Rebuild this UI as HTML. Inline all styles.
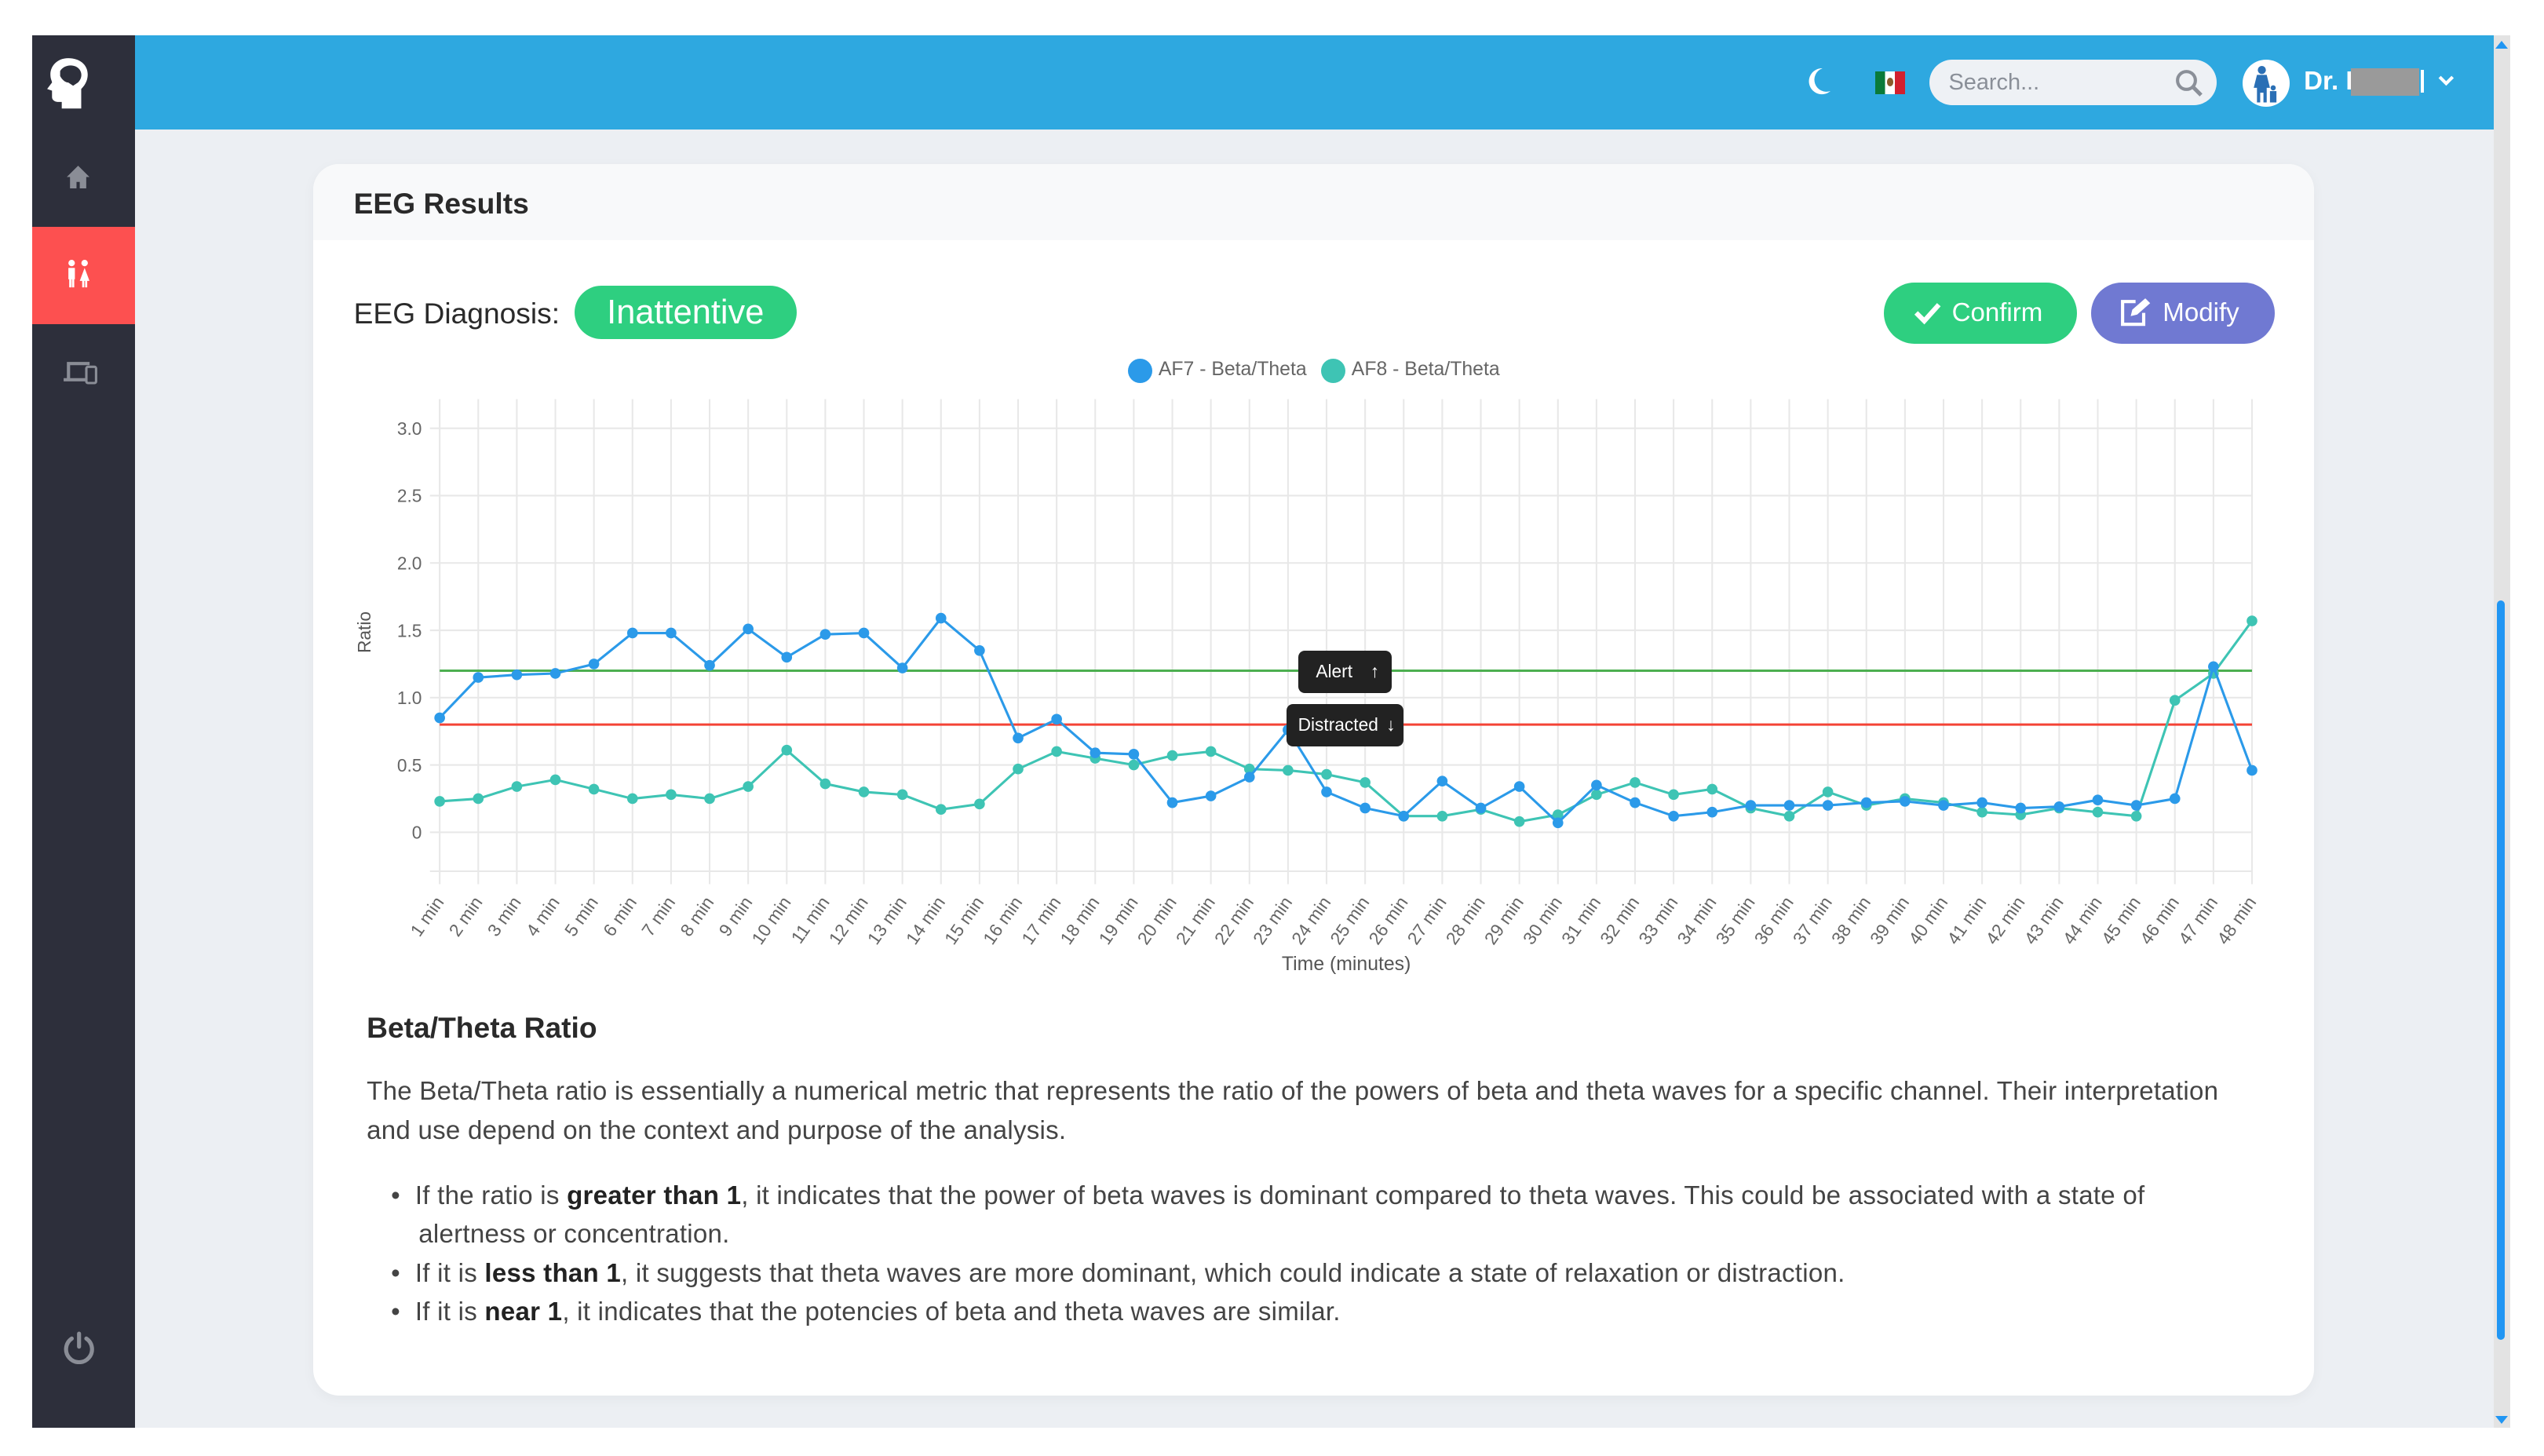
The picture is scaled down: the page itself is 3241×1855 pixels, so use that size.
<!DOCTYPE html>
<html><head><meta charset="utf-8">
<style>
*{box-sizing:border-box;margin:0;padding:0}
html,body{width:3241px;height:1855px;overflow:hidden;background:#fff}
#w{position:relative;width:1568px;height:898px;zoom:2.067;font-family:"Liberation Sans",sans-serif;color:#222}
.a{position:absolute}
.nw{white-space:nowrap}
</style></head><body><div id="w">
<div class="a" style="left:20px;top:22px;width:63px;height:858px;background:#2d2f3b"></div>
<svg class="a" style="left:28px;top:34px" width="28" height="34" viewBox="0 0 28 34"><path d="M14 2C7 2 3 7 3 12c0 3 1 4 1 5l-3 4 3 1v4c0 2 2 3 4 3h2v4h12V21c3-3 4-6 4-9 0-6-5-10-12-10z" fill="#fff"/><path d="M9 10c2-4 9-5 12-1 2 3 1 6-1 8l-3 2-3-2c-2 0-4-2-5-4z" fill="#2d2f3b"/></svg>
<svg class="a" style="left:40px;top:101px" width="16" height="16" viewBox="0 0 16 16"><path d="M8 1L1 8h2v7h4v-4h2v4h4V8h2z" fill="#8a8d96"/></svg>
<div class="a" style="left:20px;top:140px;width:63px;height:60px;background:#fd5050"></div>
<svg class="a" style="left:40px;top:160px" width="16" height="18" viewBox="0 0 16 18"><circle cx="4" cy="2" r="2" fill="#fff"/><circle cx="12" cy="2" r="2" fill="#fff"/><rect x="2" y="5" width="4" height="7" fill="#fff"/><rect x="2.5" y="11" width="1.4" height="6" fill="#fff"/><rect x="4.2" y="11" width="1.4" height="6" fill="#fff"/><path d="M12 5l-3 8h6z" fill="#fff"/><rect x="10.5" y="12" width="1.3" height="5" fill="#fff"/><rect x="12.3" y="12" width="1.3" height="5" fill="#fff"/></svg>
<svg class="a" style="left:38px;top:221px" width="22" height="16" viewBox="0 0 22 16"><path d="M3 2h14v2H5v8h10v2H1v-2h2z" fill="#8a8d96"/><rect x="15" y="5" width="6" height="10" rx="1" fill="none" stroke="#8a8d96" stroke-width="1.5"/></svg>
<svg class="a" style="left:38px;top:820px" width="21" height="21" viewBox="0 0 21 21"><path d="M6 5a8 8 0 1 0 9 0" fill="none" stroke="#8a8d96" stroke-width="2.5" stroke-linecap="round"/><path d="M10.5 2v8" stroke="#8a8d96" stroke-width="2.5" stroke-linecap="round"/></svg>
<div class="a" style="left:83px;top:80px;width:1454px;height:800px;background:#eceff3"></div>
<div class="a" style="left:1537px;top:22px;width:10px;height:858px;background:#e3e3e3"></div>
<div class="a" style="left:1539px;top:370px;width:5px;height:456px;background:#2196f3;border-radius:3px"></div>
<div class="a" style="left:1538px;top:25px;width:0;height:0;border-left:4px solid transparent;border-right:4px solid transparent;border-bottom:5px solid #2196f3"></div>
<div class="a" style="left:1538px;top:873px;width:0;height:0;border-left:4px solid transparent;border-right:4px solid transparent;border-top:5px solid #2196f3"></div>
<div class="a" style="left:83px;top:22px;width:1454px;height:58px;background:#2ea8e0"></div>
<svg class="a" style="left:1113px;top:41px" width="16" height="18" viewBox="0 0 16 18"><path d="M10 1a8 8 0 1 0 5 14A7 7 0 0 1 10 1z" fill="#fff"/></svg>
<div class="a" style="left:1156px;top:44px;width:18px;height:14px;background:linear-gradient(90deg,#0a7a3a 0 6px,#fff 6px 12px,#d2202f 12px)"></div>
<div class="a" style="left:1163px;top:48px;width:4px;height:5px;background:#8a5a2a;border-radius:50%"></div>
<div class="a" style="left:1189px;top:37px;width:177px;height:28px;background:#eef1f5;border-radius:14px"></div>
<div class="a nw" style="left:1201px;top:43px;font-size:14px;color:#8a8f98">Search...</div>
<svg class="a" style="left:1340px;top:42px" width="18" height="18" viewBox="0 0 18 18"><circle cx="7.5" cy="7.5" r="5.5" fill="none" stroke="#8a8f98" stroke-width="2"/><path d="M11.5 11.5l5 5" stroke="#8a8f98" stroke-width="2.4"/></svg>
<div class="a" style="left:1382px;top:37px;width:29px;height:29px;background:#fff;border-radius:50%"></div>
<svg class="a" style="left:1386px;top:40px" width="20" height="24" viewBox="0 0 20 24"><circle cx="8" cy="3" r="2.5" fill="#2a6fb5"/><path d="M5 6h6l2 8h-2v9H9v-6H7v6H5v-9H3z" fill="#2a6fb5"/><circle cx="15" cy="14" r="1.6" fill="#2a6fb5"/><path d="M13 16h4v7h-4z" fill="#2a6fb5"/></svg>
<div class="a nw" style="left:1420px;top:41px;font-size:16px;font-weight:bold;color:#fff">Dr. I</div>
<div class="a" style="left:1449px;top:42px;width:42px;height:17px;background:#9a9a9a"></div>
<div class="a" style="left:1492px;top:43px;width:2px;height:14px;background:#fff"></div>
<svg class="a" style="left:1502px;top:46px" width="11" height="8" viewBox="0 0 11 8"><path d="M1.5 1.5l4 4 4-4" fill="none" stroke="#fff" stroke-width="2"/></svg>
<div class="a" style="left:193px;top:101px;width:1233px;height:759px;background:#fff;border-radius:16px;box-shadow:0 2px 8px rgba(0,0,0,.04);overflow:hidden">
 <div style="height:47px;background:#f8f9fa"></div>
</div>
<div class="a nw" style="left:218px;top:115px;font-size:18px;font-weight:bold;color:#2a2a2a">EEG Results</div>
<div class="a nw" style="left:218px;top:183px;font-size:18px;color:#2a2a2a">EEG Diagnosis:</div>
<div class="a nw" style="left:354px;top:176px;width:137px;height:33px;border-radius:17px;background:#2ecf80;color:#fff;font-size:21px;text-align:center;line-height:33px">Inattentive</div>
<div class="a nw" style="left:1161px;top:174px;width:119px;height:38px;border-radius:19px;background:#2ecf80;color:#fff;font-size:16px;line-height:38px;padding-left:42px">Confirm</div>
<svg class="a" style="left:1179px;top:185px" width="18" height="16" viewBox="0 0 18 16"><path d="M2 8l5 5L16 3" fill="none" stroke="#fff" stroke-width="3"/></svg>
<div class="a nw" style="left:1289px;top:174px;width:113px;height:38px;border-radius:19px;background:#7079d2;color:#fff;font-size:16px;line-height:38px;padding-left:44px">Modify</div>
<svg class="a" style="left:1306px;top:183px" width="20" height="19" viewBox="0 0 20 19"><path d="M10 3H2v14h13v-7" fill="none" stroke="#fff" stroke-width="2"/><path d="M7 12l1-4 8-7 3 3-8 7z" fill="#fff"/></svg>
<div class="a" style="left:695px;top:221px;width:15px;height:15px;border-radius:50%;background:#2b9ae9"></div>
<div class="a nw" style="left:714px;top:221px;font-size:12px;color:#666">AF7 - Beta/Theta</div>
<div class="a" style="left:814px;top:221px;width:15px;height:15px;border-radius:50%;background:#3ec4b4"></div>
<div class="a nw" style="left:833px;top:221px;font-size:12px;color:#666">AF8 - Beta/Theta</div>
<svg id="ch" class="a" style="left:0;top:0" width="1560" height="620"></svg>
<div class="a nw" style="left:800px;top:401px;width:58px;height:26px;background:#222;border-radius:4px;color:#fff;font-size:11px;line-height:26px;padding-left:11px">Alert <span style="margin-left:8px">↑</span></div>
<div class="a nw" style="left:793px;top:434px;width:72px;height:26px;background:#222;border-radius:4px;color:#fff;font-size:11px;line-height:26px;padding-left:7px">Distracted <span style="margin-left:2px">↓</span></div>
<div class="a nw" style="left:790px;top:588px;font-size:12px;color:#555">Time (minutes)</div>
<div class="a nw" style="left:212px;top:383px;font-size:11px;color:#555;transform:rotate(-90deg);transform-origin:center">Ratio</div>
<div class="a nw" style="left:226px;top:623px;font-size:18px;font-weight:bold;color:#2a2a2a">Beta/Theta Ratio</div>
<div class="a nw" style="left:226px;top:661px;font-size:16px;line-height:24px;color:#444;letter-spacing:0.12px">The Beta/Theta ratio is essentially a numerical metric that represents the ratio of the powers of beta and theta waves for a specific channel. Their interpretation<br>and use depend on the context and purpose of the analysis.</div>
<div class="a nw" style="left:241px;top:725px;font-size:16px;line-height:24px;color:#444;letter-spacing:0.12px">
<div>•&nbsp; If the ratio is <b style="color:#222">greater than 1</b>, it indicates that the power of beta waves is dominant compared to theta waves. This could be associated with a state of</div>
<div style="padding-left:17px">alertness or concentration.</div>
<div>•&nbsp; If it is <b style="color:#222">less than 1</b>, it suggests that theta waves are more dominant, which could indicate a state of relaxation or distraction.</div>
<div>•&nbsp; If it is <b style="color:#222">near 1</b>, it indicates that the potencies of beta and theta waves are similar.</div>
</div>
</div>
<script>
var a=[0.85,1.15,1.17,1.18,1.25,1.48,1.48,1.24,1.51,1.3,1.47,1.48,1.22,1.59,1.35,0.7,0.84,0.59,0.58,0.22,0.27,0.41,0.76,0.3,0.18,0.12,0.38,0.18,0.34,0.07,0.35,0.22,0.12,0.15,0.2,0.2,0.2,0.22,0.23,0.2,0.22,0.18,0.19,0.24,0.2,0.25,1.23,0.46];
var b=[0.23,0.25,0.34,0.39,0.32,0.25,0.28,0.25,0.34,0.61,0.36,0.3,0.28,0.17,0.21,0.47,0.6,0.55,0.5,0.57,0.6,0.47,0.46,0.43,0.37,0.12,0.12,0.17,0.08,0.13,0.28,0.37,0.28,0.32,0.18,0.12,0.3,0.2,0.25,0.22,0.15,0.13,0.18,0.15,0.12,0.98,1.18,1.57];
var x0=271,dx=(1388-271)/47,Y=function(v){return 513-v*83};
var s='';
for(var i=0;i<48;i++){var x=x0+i*dx;s+='<line x1="'+x+'" y1="246" x2="'+x+'" y2="545" stroke="#e8e8e8"/>';
s+='<text transform="translate('+(x+3)+',556) rotate(-55)" text-anchor="end" font-size="11" fill="#666" font-family="Liberation Sans">'+(i+1)+' min</text>';}
for(var k=0;k<=6;k++){var y=Y(k*0.5);s+='<line x1="265" y1="'+y+'" x2="1388" y2="'+y+'" stroke="#e8e8e8"/>';
s+='<text x="260" y="'+(y+4)+'" text-anchor="end" font-size="11" fill="#666" font-family="Liberation Sans">'+(k==0?'0':(k*0.5).toFixed(1))+'</text>';}
s+='<line x1="265" y1="537" x2="1388" y2="537" stroke="#e8e8e8"/>';
s+='<line x1="271" y1="'+Y(1.2)+'" x2="1388" y2="'+Y(1.2)+'" stroke="#4caf50" stroke-width="1.5"/>';
s+='<line x1="271" y1="'+Y(0.8)+'" x2="1388" y2="'+Y(0.8)+'" stroke="#f44336" stroke-width="1.5"/>';
function ln(d,c){var p='';for(var i=0;i<48;i++)p+=(x0+i*dx).toFixed(1)+','+Y(d[i]).toFixed(1)+' ';
var r='<polyline points="'+p+'" fill="none" stroke="'+c+'" stroke-width="1.5"/>';
for(var i=0;i<48;i++)r+='<circle cx="'+(x0+i*dx)+'" cy="'+Y(d[i])+'" r="3.3" fill="'+c+'"/>';return r;}
s+=ln(b,'#3ec4b4')+ln(a,'#2b9ae9');
document.getElementById('ch').innerHTML=s;
</script>
</body></html>
